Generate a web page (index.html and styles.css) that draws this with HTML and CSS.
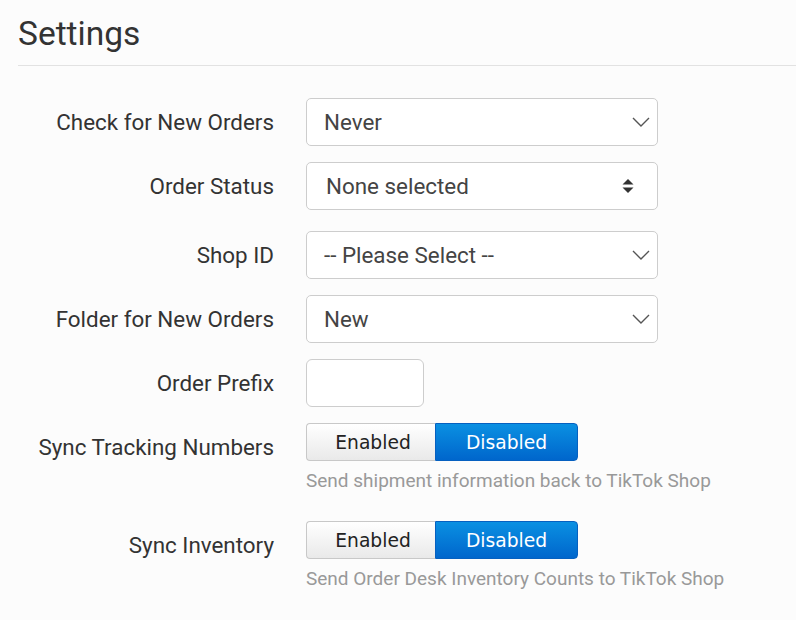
FILE: index.html
```html
<!DOCTYPE html>
<html>
<head>
<meta charset="utf-8">
<link rel="stylesheet" href="styles.css">
</head>
<body>
<div class="page">
  <h1 class="title">Settings</h1>
  <hr class="divider">
  <form class="form">
    <div class="row">
      <label class="label">Check for New Orders</label>
      <div class="select">
        <span class="select-text">Never</span>
        <svg class="chev" width="18" height="10" viewBox="0 0 18 10"><polyline points="1,1 9,9 17,1" fill="none" stroke="#555" stroke-width="1.4"/></svg>
      </div>
    </div>
    <div class="row row-wide">
      <label class="label">Order Status</label>
      <div class="select">
        <span class="select-text multi">None selected</span>
        <svg class="updown" width="12" height="14" viewBox="0 0 12 14"><polygon points="6,0 11.5,5.5 0.5,5.5" fill="#333"/><polygon points="0.5,8.5 11.5,8.5 6,14" fill="#333"/></svg>
      </div>
    </div>
    <div class="row">
      <label class="label">Shop ID</label>
      <div class="select">
        <span class="select-text please">-- Please Select --</span>
        <svg class="chev" width="18" height="10" viewBox="0 0 18 10"><polyline points="1,1 9,9 17,1" fill="none" stroke="#555" stroke-width="1.4"/></svg>
      </div>
    </div>
    <div class="row">
      <label class="label">Folder for New Orders</label>
      <div class="select">
        <span class="select-text">New</span>
        <svg class="chev" width="18" height="10" viewBox="0 0 18 10"><polyline points="1,1 9,9 17,1" fill="none" stroke="#555" stroke-width="1.4"/></svg>
      </div>
    </div>
    <div class="row">
      <label class="label">Order Prefix</label>
      <div class="input"></div>
    </div>
    <div class="row row-toggle">
      <label class="label label-toggle">Sync Tracking Numbers</label>
      <div class="control">
        <div class="toggle">
          <span class="opt opt-off">Enabled</span>
          <span class="opt opt-on">Disabled</span>
        </div>
        <p class="help">Send shipment information back to TikTok Shop</p>
      </div>
    </div>
    <div class="row row-toggle">
      <label class="label label-toggle">Sync Inventory</label>
      <div class="control">
        <div class="toggle">
          <span class="opt opt-off">Enabled</span>
          <span class="opt opt-on">Disabled</span>
        </div>
        <p class="help">Send Order Desk Inventory Counts to TikTok Shop</p>
      </div>
    </div>
  </form>
</div>
</body>
</html>
```

FILE: styles.css
```css
html, body {
  margin: 0;
  padding: 0;
  background: #fcfcfc;
}
body {
  font-family: Roboto, "Liberation Sans", sans-serif;
  color: #333;
}
.page {
  padding: 14px 0 0 18px;
}
.title {
  margin: 0;
  font-size: 33.5px;
  font-weight: 400;
  line-height: 39px;
  color: #333;
}
.divider {
  margin: 12px 0 0 0;
  border: 0;
  border-top: 1px solid #e2e2e2;
  height: 0;
}
.form {
  margin-top: 32px;
}
.row {
  display: flex;
  align-items: center;
  margin-bottom: 16px;
}
.row-wide {
  margin-bottom: 21px;
}
.label {
  width: 256px;
  flex: none;
  text-align: right;
  font-size: 22.4px;
  line-height: 26px;
  color: #333;
}
.select {
  margin-left: 32px;
  height: 46px;
  border: 1px solid #cdcdcd;
  border-radius: 5px;
  background: #fff;
  display: flex;
  align-items: center;
  justify-content: space-between;
  padding: 0 7px 0 17px;
  box-sizing: content-box;
  width: 326px;
}
.select-text {
  font-size: 22.4px;
  color: #444;
}
.select-text.multi {
  margin-left: 2px;
}
.chev {
  display: block;
}
.updown {
  display: block;
  margin-right: 16px;
}
.input {
  margin-left: 32px;
  width: 116px;
  height: 46px;
  border: 1px solid #cdcdcd;
  border-radius: 6px;
  background: #fff;
}
.row-toggle {
  align-items: flex-start;
  margin-bottom: 0;
}
.row-toggle + .row-toggle {
  margin-top: 28px;
}
.label-toggle {
  padding-top: 11px;
}
.control {
  margin-left: 32px;
}
.toggle {
  display: flex;
  height: 38px;
  font-family: "DejaVu Sans", Verdana, sans-serif;
  font-size: 18.7px;
}
.opt {
  display: flex;
  align-items: center;
  justify-content: center;
  box-sizing: border-box;
}
.opt-off {
  width: 129px;
  padding-left: 4px;
  border: 1px solid #c8c8c8;
  border-right: 0;
  border-radius: 4px 0 0 4px;
  background: linear-gradient(#ffffff, #e9e9e9);
  color: #222;
}
.opt-on {
  width: 143px;
  border: 1px solid #0660c0;
  border-radius: 0 4px 4px 0;
  background: linear-gradient(#0a90e2, #0066cc);
  color: #fff;
}
.help {
  margin: 8px 0 0 0;
  font-size: 19px;
  color: #999;
  line-height: 24px;
}
```
